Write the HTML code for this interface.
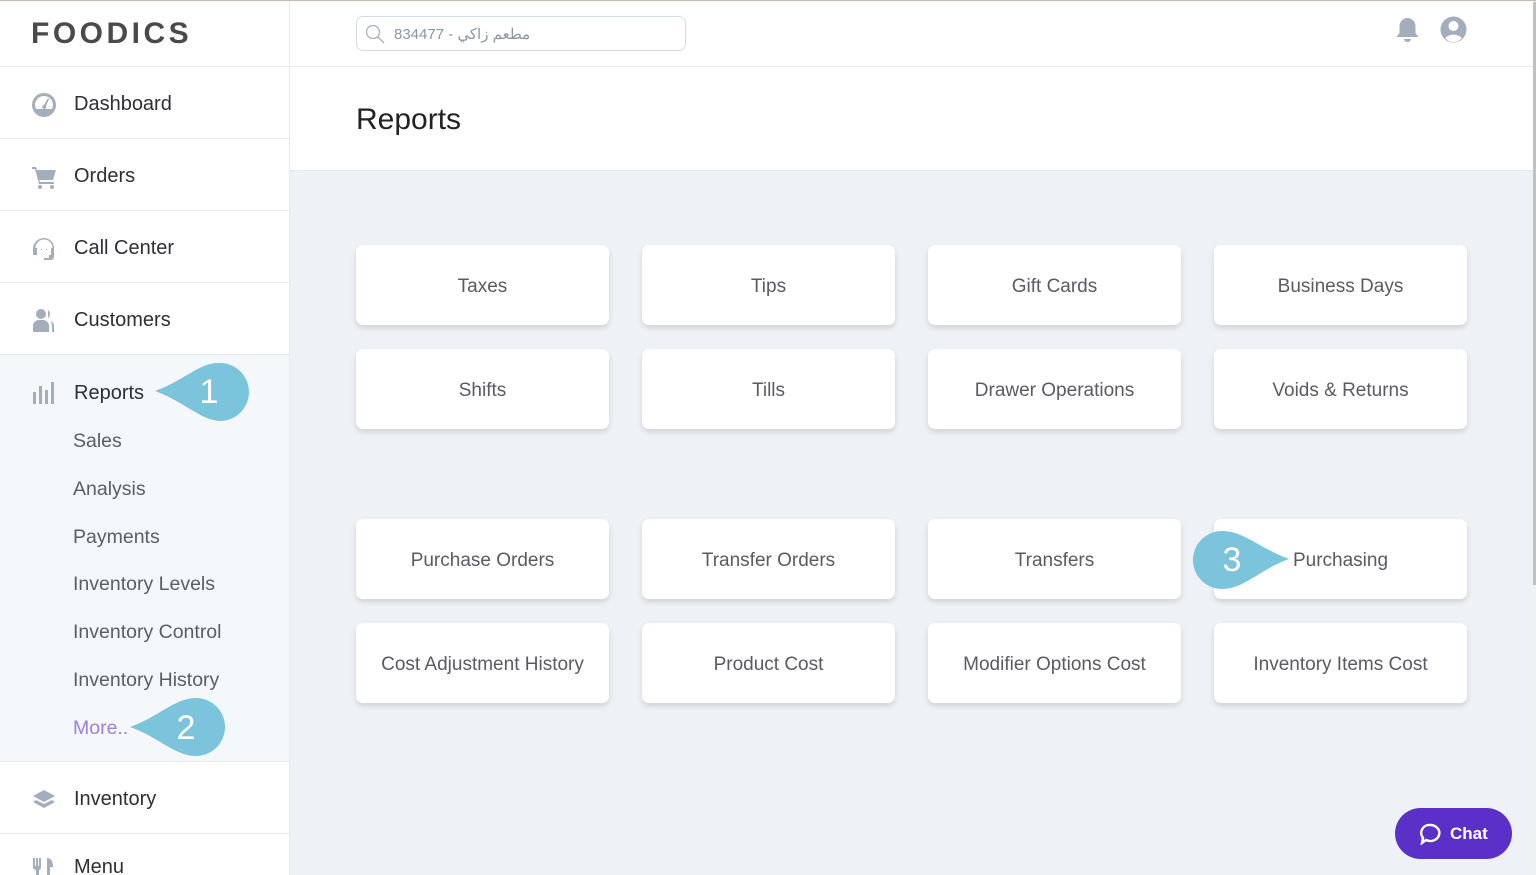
<!DOCTYPE html>
<html><head><meta charset="utf-8"><style>
*{box-sizing:border-box;margin:0;padding:0}
html,body{width:1536px;height:875px;overflow:hidden}
body{background:#eef1f5;font-family:"Liberation Sans","Noto Sans CJK SC",sans-serif;position:relative;color:#333}
.top{position:absolute;left:0;top:0;width:1536px;height:1px;background:#c9b9b5;z-index:5}
.side{position:absolute;left:0;top:0;width:290px;height:875px;background:#fff;border-right:1px solid #e6eaf0;overflow:hidden}
.logo{height:67px;border-bottom:1px solid #e6eaf0;padding:17px 0 0 31px;font:900 30px "Liberation Sans",sans-serif;letter-spacing:3.5px;color:#4a4a4a}
.it{height:72px;border-bottom:1px solid #e6eaf0;display:flex;align-items:center;padding-left:31px;padding-top:4px;font-size:20px;color:#2e2e35}
.it svg{width:26px;height:26px;margin-right:17px;fill:#a3aebd}
.rep{background:#f5f8fb;height:407px;border-bottom:1px solid #e6eaf0}
.rep .it{border:none;height:72px}
.sub{padding-left:73px;padding-top:2px;font-size:19.5px;color:#5c5c66;height:47.8px;line-height:24px}
.hdr{position:absolute;left:290px;top:0;width:1243px;height:67px;background:#fff;border-bottom:1px solid #e6eaf0}
.search{position:absolute;left:66px;top:16px;width:330px;height:35px;border:1px solid #d5dbe6;border-radius:7px;font-size:15px;color:#8b95a5;padding:8px 0 0 37px}
.title{position:absolute;left:290px;top:67px;width:1243px;height:104px;background:#fff;border-bottom:1px solid #e3e8ef;font-size:30px;padding:36px 0 0 66px;color:#222}
.card{position:absolute;width:253px;height:80px;background:#fff;border-radius:7px;box-shadow:0 3px 6px rgba(0,0,0,.13);display:flex;align-items:center;justify-content:center;padding-top:4px;font-size:19px;color:#5a5a66}
.scroll{position:absolute;left:1533px;top:0;width:3px;height:875px;background:#f1f1f1}
.thumb{position:absolute;left:1533px;top:2px;width:3px;height:583px;background:#c1c1c1}
.chat{position:absolute;left:1395px;top:808px;width:117px;height:51px;border-radius:26px;background:#5a30c8;color:#fff;font:bold 17px "Liberation Sans",sans-serif;display:flex;align-items:center;padding-left:24px}
</style></head><body>
<div class="top"></div>
<div class="side">
 <div class="logo">FOODICS</div>
 <div class="it"><svg viewBox="0 0 26 26"><path d="M13 1a12 12 0 1 0 0 24 12 12 0 0 0 0-24zm0 3a9 9 0 0 1 8 13H5A9 9 0 0 1 13 4zm4 2-4 7a2 2 0 1 0 2 1l3-7z"/></svg>Dashboard</div>
 <div class="it"><svg viewBox="0 0 26 26"><path d="M1 3h4l1 3h19l-3 10H8l1 2h14v2H8L4 5H1zM9 21a2 2 0 1 1 0 4 2 2 0 0 1 0-4zm12 0a2 2 0 1 1 0 4 2 2 0 0 1 0-4z"/></svg>Orders</div>
 <div class="it"><svg viewBox="0 0 26 26"><path d="M13 2A11 11 0 0 0 2 13v6h4v-7H4.5A8.5 8.5 0 0 1 21.5 12H20v7h-2v3h-5v2h7a3 3 0 0 0 3-3v-8A10 10 0 0 0 13 2zm-3 11h1v1h-1zm5 0h1v1h-1z"/></svg>Call Center</div>
 <div class="it"><svg viewBox="0 0 26 26"><circle cx="10" cy="6" r="5"/><path d="M2 24v-6a6 6 0 0 1 6-6h4a6 6 0 0 1 6 6v6zM17 2a5 5 0 0 1 0 8zm3 11a6 6 0 0 1 3 5v6h-2v-6z"/></svg>Customers</div>
 <div class="rep">
  <div class="it"><svg viewBox="0 0 26 26"><path d="M2 12h3v12H2zm6-6h3v18H8zm6 4h3v14h-3zm6-8h3v22h-3z"/></svg>Reports</div>
  <div class="sub">Sales</div><div class="sub">Analysis</div><div class="sub">Payments</div><div class="sub">Inventory Levels</div><div class="sub">Inventory Control</div><div class="sub">Inventory History</div><div class="sub" style="color:#9b7fe0">More..</div>
 </div>
 <div class="it"><svg viewBox="0 0 26 26"><path d="M13 3l11 6-11 6L2 9zM5 13l8 4 8-4 3 2-11 6-11-6z"/></svg>Inventory</div>
 <div class="it" style="align-items:flex-start;padding-top:22px"><svg viewBox="0 0 26 26"><path d="M2 2h2v8h1V2h2v8h1V2h2v9a3 3 0 0 1-2 3v10H5V14a3 3 0 0 1-3-3zm14 0c4 0 6 3 6 9h-3v13h-3z"/></svg>Menu</div>
</div>
<div class="hdr"><div class="search"><svg style="position:absolute;left:8px;top:7px" width="20" height="20" viewBox="0 0 20 20"><circle cx="8" cy="8" r="6.5" fill="none" stroke="#a7b0bd" stroke-width="1.3"/><path d="M13 13l6 6" stroke="#a7b0bd" stroke-width="1.3"/></svg>834477 - مطعم زاكي</div>
<svg style="position:absolute;left:1105px;top:16px" width="25" height="28" viewBox="0 0 25 28"><path d="M12.5 2a8 8 0 0 1 8 8v7l3 4H1.5l3-4v-7a8 8 0 0 1 8-8zM9 23h7a3.5 3 0 0 1-7 0z" fill="#a3aebd"/></svg>
<svg style="position:absolute;left:1150px;top:16px" width="27" height="27" viewBox="0 0 27 27"><circle cx="13.5" cy="13.5" r="13" fill="#a3aebd"/><circle cx="13.5" cy="10" r="5" fill="#fff"/><path d="M5 22a10 7 0 0 1 17 0a11 11 0 0 1-17 0z" fill="#fff"/></svg>
</div>
<div class="title">Reports</div>
<div class="card" style="left:356px;top:245px">Taxes</div>
<div class="card" style="left:642px;top:245px">Tips</div>
<div class="card" style="left:928px;top:245px">Gift Cards</div>
<div class="card" style="left:1214px;top:245px">Business Days</div>
<div class="card" style="left:356px;top:349px">Shifts</div>
<div class="card" style="left:642px;top:349px">Tills</div>
<div class="card" style="left:928px;top:349px">Drawer Operations</div>
<div class="card" style="left:1214px;top:349px">Voids &amp; Returns</div>
<div class="card" style="left:356px;top:519px">Purchase Orders</div>
<div class="card" style="left:642px;top:519px">Transfer Orders</div>
<div class="card" style="left:928px;top:519px">Transfers</div>
<div class="card" style="left:1214px;top:519px">Purchasing</div>
<div class="card" style="left:356px;top:623px">Cost Adjustment History</div>
<div class="card" style="left:642px;top:623px">Product Cost</div>
<div class="card" style="left:928px;top:623px">Modifier Options Cost</div>
<div class="card" style="left:1214px;top:623px">Inventory Items Cost</div>
<svg style="position:absolute;left:0;top:0" width="1536" height="875">
<g fill="#7bc4dc"><path d="M155 391C185 380 200 362 220 363A29 29 0 0 1 220 421C200 420 185 402 155 391Z"/>
<path d="M130 727C160 716 175 698 196 698A29 29 0 0 1 196 756C175 756 160 738 130 727Z"/>
<path d="M1289 559C1259 548 1244 531 1222 531A29 29 0 0 0 1222 589C1244 589 1259 570 1289 559Z"/></g>
<g fill="#fff" font-family="Liberation Sans,sans-serif" font-size="34" text-anchor="middle"><text x="209" y="403">1</text><text x="186" y="739">2</text><text x="1232" y="571">3</text></g>
</svg>
<div class="scroll"></div><div class="thumb"></div>
<div class="chat"><svg width="22" height="22" viewBox="0 0 22 22" style="margin-right:9px"><path d="M11 2a9 8 0 1 1-4 15l-4 3 1-5A8 8 0 0 1 11 2z" fill="none" stroke="#fff" stroke-width="2.4"/></svg>Chat</div>
</body></html>
